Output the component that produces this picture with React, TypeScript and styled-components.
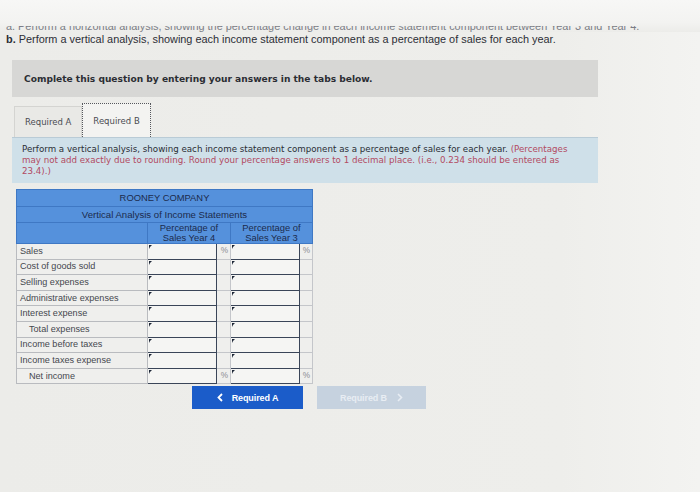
import React from "react";
import styled, { createGlobalStyle } from "styled-components";

const Global = createGlobalStyle`
  html, body { margin: 0; padding: 0; }
  body {
    width: 700px;
    height: 492px;
    overflow: hidden;
    background: linear-gradient(90deg, #ecece9 0%, #eeeeeb 80%, #f3f3f1 100%);
    font-family: "Liberation Sans", Arial, sans-serif;
  }
`;

const Page = styled.div`
  width: 700px;
  height: 492px;
  display: flex;
  flex-direction: column;
`;

const Haze = styled.div`
  height: 32px;
  display: flex;
  flex-direction: column;
  justify-content: flex-end;
  background: linear-gradient(180deg, #f7f7f6 0%, #f3f3f1 70%, #ecece9 100%);
`;

const ClippedLine = styled.div`
  height: 6px;
  overflow: hidden;
  padding-left: 6px;
  display: flex;
  align-items: flex-end;
`;

const LineText = styled.div<{ $faded?: boolean }>`
  font-size: 10.9px;
  line-height: 12px;
  color: ${(p) => (p.$faded ? "#7b7d85" : "#2c2e36")};
  white-space: nowrap;
  b { font-weight: bold; }
`;

const LineB = styled.div`
  padding: 1px 0 0 6px;
`;

const Card = styled.div`
  margin: 15px 0 0 12px;
  width: 586px;
  display: flex;
  flex-direction: column;
`;

const Instruction = styled.div`
  height: 37px;
  background: #d7d7d5;
  display: flex;
  align-items: center;
  padding-left: 12px;
  font-family: "DejaVu Sans", Verdana, sans-serif;
  font-weight: bold;
  font-size: 9.1px;
  color: #2b2d33;
`;

const Tabs = styled.div`
  margin-top: 6px;
  display: flex;
  align-items: flex-end;
  padding-left: 2px;
  height: 34px;
`;

const Tab = styled.div<{ $active?: boolean }>`
  height: ${(p) => (p.$active ? "34px" : "31px")};
  box-sizing: border-box;
  padding: 0 10px;
  display: flex;
  align-items: center;
  font-family: "DejaVu Sans", Verdana, sans-serif;
  font-size: 8.5px;
  color: #4a4c52;
  background: ${(p) => (p.$active ? "#f3f3f1" : "#e9e9e6")};
  border: ${(p) => (p.$active ? "1px dotted #55575c" : "1px solid #d4d4d1")};
  border-bottom: none;
`;

const InfoBox = styled.div`
  background: #cfe0e9;
  border-top: 1px solid #b9cbd6;
  padding: 6px 12px 6px 10px;
  font-family: "DejaVu Sans", Verdana, sans-serif;
  font-size: 8.7px;
  line-height: 11px;
  color: #2a2d34;
`;

const Red = styled.span`
  color: #b24a62;
`;

const TableWrap = styled.div`
  margin-top: 6px;
  padding-left: 4px;
`;

const Table = styled.table`
  border-collapse: collapse;
  table-layout: fixed;
  width: 296px;
  font-family: "Liberation Sans", Arial, sans-serif;
`;

const HeadCell = styled.th<{ $h: number; $big?: boolean }>`
  background: #5591dc;
  height: ${(p) => p.$h}px;
  padding: 0;
  font-weight: normal;
  font-size: ${(p) => (p.$big ? "9.6px" : "9.4px")};
  line-height: 10px;
  color: #1c2b4c;
  text-align: center;
  border: 1px solid #3f78c4;
`;

const LabelCell = styled.td<{ $indent?: boolean }>`
  height: 14.6px;
  padding: 0 0 0 ${(p) => (p.$indent ? "12px" : "3px")};
  font-size: 9.1px;
  line-height: 11px;
  color: #45474d;
  background: #efefed;
  border: 1px solid #b9bbbf;
  white-space: nowrap;
  overflow: hidden;
`;

const InputCell = styled.td`
  padding: 0;
  height: 14.6px;
  border: 1.5px solid #3a4558;
  background: #f5f5f3;
  position: relative;
  &::before {
    content: "";
    position: absolute;
    left: 1px;
    top: 1px;
    width: 0;
    height: 0;
    border-top: 2px solid #1d2636;
    border-right: 2px solid transparent;
    border-left: 1px solid #1d2636;
    border-bottom: 2px solid transparent;
  }
`;

const PctCell = styled.td`
  padding: 0 2px 0 0;
  height: 14.6px;
  text-align: right;
  font-size: 8.2px;
  line-height: 10px;
  color: #8a8c92;
  background: #efefed;
  border: 1px solid #c4c6ca;
`;

const Buttons = styled.div`
  margin-top: 2px;
  padding-left: 180px;
  display: flex;
  gap: 14px;
`;

const NavButton = styled.div<{ $disabled?: boolean }>`
  width: ${(p) => (p.$disabled ? "109px" : "111px")};
  height: 23px;
  display: flex;
  align-items: center;
  justify-content: center;
  gap: ${(p) => (p.$disabled ? "10px" : "9px")};
  background: ${(p) => (p.$disabled ? "#c6d2df" : "#1b5cc9")};
  color: ${(p) => (p.$disabled ? "#e8edf3" : "#ffffff")};
  font-weight: bold;
  font-size: 9px;
  letter-spacing: -0.1px;
`;

const Chevron = styled.svg`
  width: 6px;
  height: 9px;
`;

const rows: { label: string; indent?: boolean; pct?: boolean }[] = [
  { label: "Sales", pct: true },
  { label: "Cost of goods sold" },
  { label: "Selling expenses" },
  { label: "Administrative expenses" },
  { label: "Interest expense" },
  { label: "Total expenses", indent: true },
  { label: "Income before taxes" },
  { label: "Income taxes expense" },
  { label: "Net income", indent: true, pct: true },
];

export default function App() {
  return (
    <>
      <Global />
      <Page>
        <Haze>
          <ClippedLine>
            <LineText $faded>
              a. Perform a horizontal analysis, showing the percentage change in each income statement component between Year 3 and Year 4.
            </LineText>
          </ClippedLine>
        </Haze>
        <LineB>
          <LineText>
            <b>b.</b> Perform a vertical analysis, showing each income statement component as a percentage of sales for each year.
          </LineText>
        </LineB>
        <Card>
          <Instruction>Complete this question by entering your answers in the tabs below.</Instruction>
          <Tabs>
            <Tab>Required A</Tab>
            <Tab $active>Required B</Tab>
          </Tabs>
          <InfoBox>
            Perform a vertical analysis, showing each income statement component as a percentage of sales for each year.{" "}
            <Red>
              (Percentages may not add exactly due to rounding. Round your percentage answers to 1 decimal place. (i.e., 0.234 should be entered as 23.4).)
            </Red>
          </InfoBox>
          <TableWrap>
            <Table>
              <colgroup>
                <col style={{ width: 131 }} />
                <col style={{ width: 69 }} />
                <col style={{ width: 14 }} />
                <col style={{ width: 69 }} />
                <col style={{ width: 13 }} />
              </colgroup>
              <thead>
                <tr>
                  <HeadCell $h={16} colSpan={5}>ROONEY COMPANY</HeadCell>
                </tr>
                <tr>
                  <HeadCell $h={15} $big colSpan={5}>Vertical Analysis of Income Statements</HeadCell>
                </tr>
                <tr>
                  <HeadCell $h={20}></HeadCell>
                  <HeadCell $h={20} colSpan={2}>Percentage of<br />Sales Year 4</HeadCell>
                  <HeadCell $h={20} colSpan={2}>Percentage of<br />Sales Year 3</HeadCell>
                </tr>
              </thead>
              <tbody>
                {rows.map((r) => (
                  <tr key={r.label}>
                    <LabelCell $indent={r.indent}>{r.label}</LabelCell>
                    <InputCell />
                    <PctCell>{r.pct ? "%" : ""}</PctCell>
                    <InputCell />
                    <PctCell>{r.pct ? "%" : ""}</PctCell>
                  </tr>
                ))}
              </tbody>
            </Table>
          </TableWrap>
          <Buttons>
            <NavButton>
              <Chevron viewBox="0 0 6 9">
                <path d="M5 1 L1.5 4.5 L5 8" fill="none" stroke="currentColor" strokeWidth="1.8" />
              </Chevron>
              Required A
            </NavButton>
            <NavButton $disabled>
              Required B
              <Chevron viewBox="0 0 6 9">
                <path d="M1 1 L4.5 4.5 L1 8" fill="none" stroke="currentColor" strokeWidth="1.6" />
              </Chevron>
            </NavButton>
          </Buttons>
        </Card>
      </Page>
    </>
  );
}
